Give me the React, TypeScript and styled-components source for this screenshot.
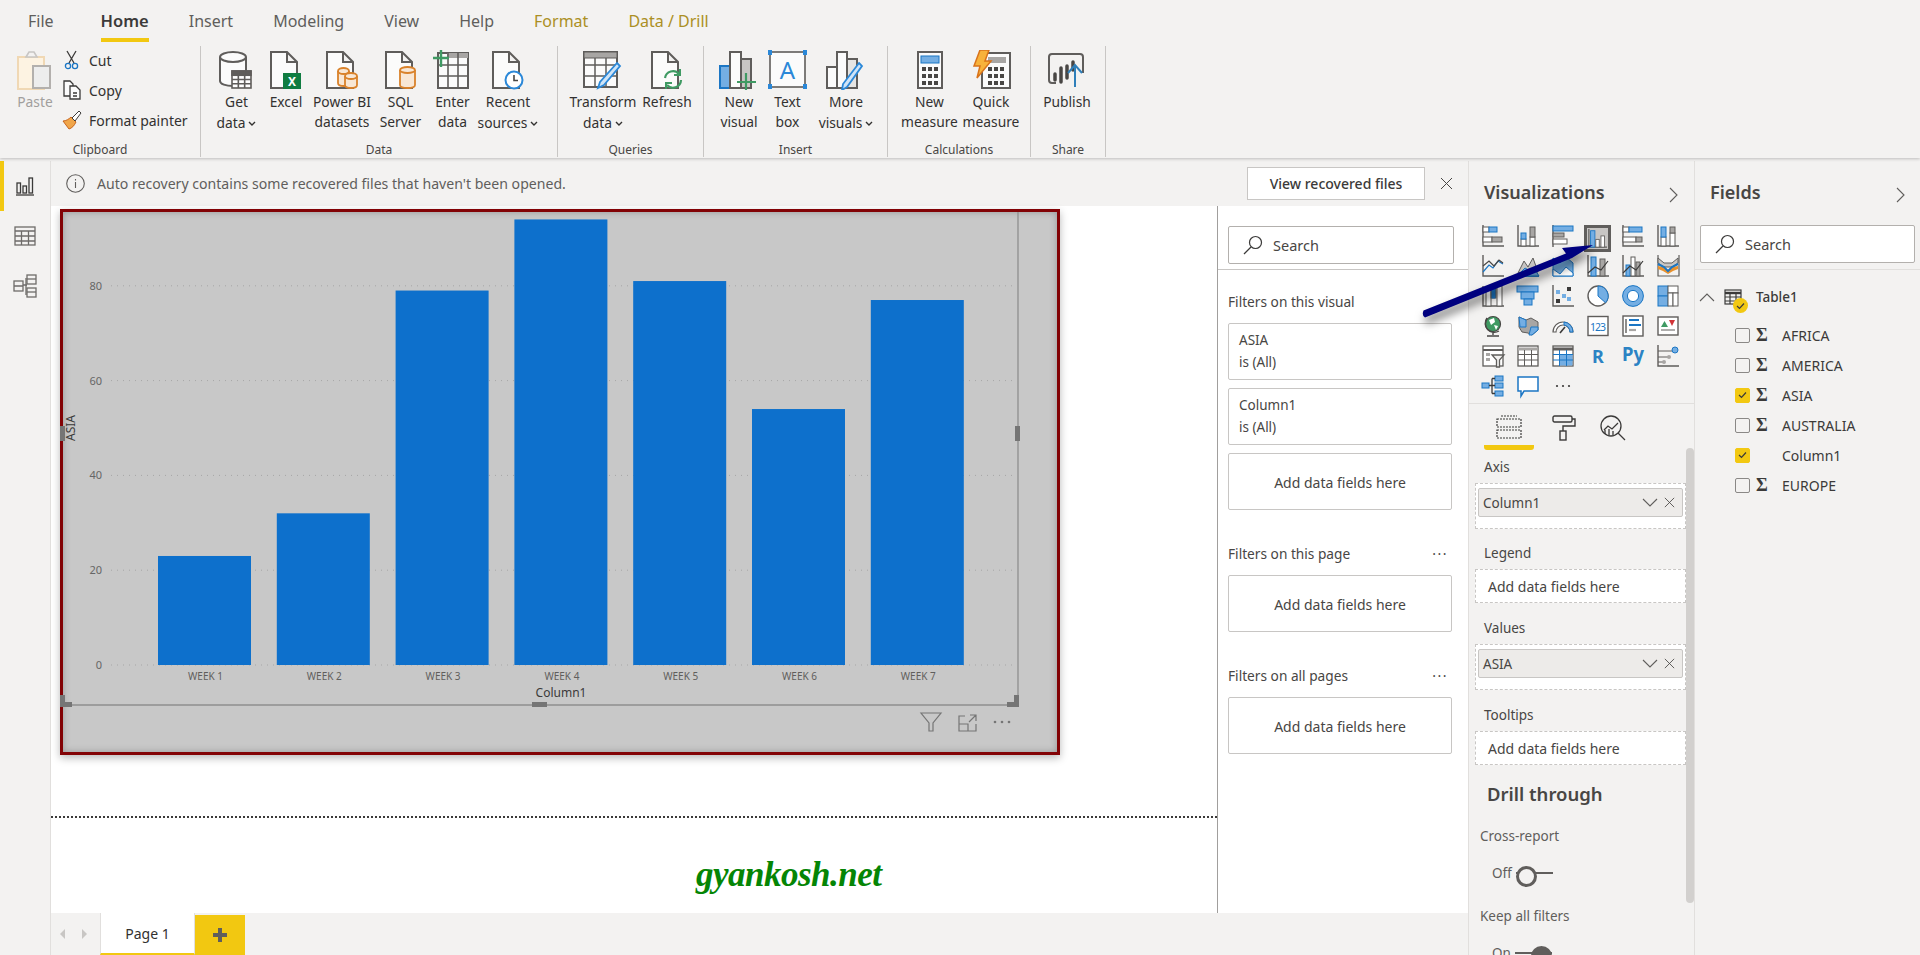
import React from "react";
import styled, { createGlobalStyle } from "styled-components";

const GlobalStyle = createGlobalStyle`
  html, body { margin: 0; padding: 0; height: 100%; background: #f3f2f1; }
  * { box-sizing: border-box; }
  body { font-family: "Noto Sans", "Open Sans", sans-serif; color: #3b3a39; }
`;

const O = "#5f5d5b";
const B = "#1b76c4";
const L = "#74aee3";
const G = "#a8a6a4";

/* ---------- ribbon icons ---------- */

const Doc = () => (
  <path d="M5 2h16l10 10v26H5z M21 2v10h10" fill="#fbfbfb" stroke={O} strokeWidth="2" />
);

const Cylinder = ({ x, y, w, h, c = "#d9822b" }: { x: number; y: number; w: number; h: number; c?: string }) => (
  <g fill="#f8e7d5" stroke={c} strokeWidth="1.8">
    <path d={`M${x} ${y + 3}v${h - 6}c0 4 ${w} 4 ${w} 0v-${h - 6}`} />
    <ellipse cx={x + w / 2} cy={y + 3} rx={w / 2} ry="3" />
  </g>
);

const MiniGrid = ({ x, y, w, h }: { x: number; y: number; w: number; h: number }) => (
  <g stroke={O} fill="none" strokeWidth="1.6">
    <rect x={x} y={y} width={w} height={h} fill="#fff" />
    <rect x={x} y={y} width={w} height={h / 4} fill={O} />
    <path d={`M${x + w / 3} ${y}v${h}M${x + (2 * w) / 3} ${y}v${h}M${x} ${y + h / 2}h${w}M${x} ${y + (3 * h) / 4}h${w}`} />
  </g>
);

const iconGetData = (
  <>
    <path d="M3 7v24c0 3 6 5 13 5s13-2 13-5V7" fill="#fbfbfb" stroke={O} strokeWidth="2" />
    <ellipse cx="16" cy="7" rx="13" ry="5" fill="#fbfbfb" stroke={O} strokeWidth="2" />
    <MiniGrid x={15} y={21} w={19} h={17} />
  </>
);
const iconExcel = (
  <>
    <Doc />
    <rect x="17" y="23" width="18" height="16" fill="#107c41" />
    <text x="26" y="36" textAnchor="middle" fontSize="12" fontWeight="700" fill="#fff">X</text>
  </>
);
const iconPbi = (
  <>
    <Doc />
    <Cylinder x={16} y={18} w={11} h={18} />
    <Cylinder x={23} y={23} w={12} h={15} />
  </>
);
const iconSql = (
  <>
    <Doc />
    <Cylinder x={19} y={17} w={15} h={21} />
  </>
);
const iconEnter = (
  <>
    <rect x="5" y="3" width="30" height="35" fill="#fbfbfb" stroke={O} strokeWidth="2" />
    <rect x="14" y="3" width="21" height="5" fill={G} />
    <path d="M5 15h30M5 26h30M15 3v35M25 3v35" stroke={O} strokeWidth="1.6" />
    <path d="M0 8h16M8 0v17" stroke="#3f9a63" strokeWidth="2.4" />
  </>
);
const iconRecent = (
  <>
    <Doc />
    <circle cx="26" cy="30" r="8.5" fill="#fff" stroke="#2b88d8" strokeWidth="2" />
    <path d="M26 25v5.5h4" fill="none" stroke="#484644" strokeWidth="1.6" />
  </>
);
const iconTransform = (
  <>
    <rect x="1" y="2" width="33" height="35" fill="#fbfbfb" stroke={O} strokeWidth="2" />
    <rect x="1" y="2" width="33" height="6" fill={G} stroke={O} strokeWidth="1" />
    <path d="M1 15h33M1 26h33M12 8v29M23 8v29" stroke={O} strokeWidth="1.5" />
    <path d="M34 13l3 3-16 19-6 3 2-6z" fill="#cfe4f7" stroke="#2b88d8" strokeWidth="1.8" />
  </>
);
const iconRefresh = (
  <>
    <Doc />
    <path d="M18 28a8 8 0 0 1 14-4M34 30a8 8 0 0 1-14 5" fill="none" stroke="#3f9a63" strokeWidth="2.2" />
    <path d="M33 19v6h-6M19 39v-6h6" fill="none" stroke="#3f9a63" strokeWidth="2" />
  </>
);
const iconNewVisual = (
  <>
    <rect x="1" y="16" width="10" height="22" fill={L} stroke="#1b76c4" strokeWidth="2" />
    <rect x="11" y="2" width="11" height="36" fill="#fbfbfb" stroke={O} strokeWidth="2" />
    <rect x="22" y="9" width="10" height="29" fill="#c8c6c4" stroke={O} strokeWidth="2" />
    <path d="M18 32h19M27 23v17" stroke="#3f9a63" strokeWidth="2.2" />
  </>
);
const iconTextBox = (
  <>
    <rect x="2" y="2" width="35" height="35" fill="#fbfbfb" stroke={O} strokeWidth="1.6" />
    <g fill="#2b88d8">
      <rect x="0" y="0" width="4" height="5" />
      <rect x="35" y="0" width="4" height="5" />
      <rect x="0" y="34" width="4" height="5" />
      <rect x="35" y="34" width="4" height="5" />
    </g>
    <text x="19.5" y="29" textAnchor="middle" fontSize="24" fill="#2b88d8">A</text>
  </>
);
const iconMoreVisuals = (
  <>
    <rect x="1" y="17" width="10" height="21" fill="#fbfbfb" stroke={O} strokeWidth="2" />
    <rect x="11" y="2" width="10" height="36" fill="#fbfbfb" stroke={O} strokeWidth="2" />
    <rect x="21" y="9" width="10" height="29" fill="#e6e5e3" stroke={O} strokeWidth="2" />
    <path d="M33 13l3 3-15 21-5 3 1-6z" fill="#cfe4f7" stroke="#2b88d8" strokeWidth="1.8" />
  </>
);
const Keys = ({ x, y }: { x: number; y: number }) => (
  <g fill="#484644">
    {[0, 7, 14].map((dy) =>
      [0, 6, 12].map((dx) => <rect key={`${dx}-${dy}`} x={x + dx} y={y + dy} width="4" height="4" />)
    )}
  </g>
);
const iconMeasure = (
  <>
    <rect x="8" y="2" width="24" height="36" fill="#fbfbfb" stroke={O} strokeWidth="2" />
    <rect x="11" y="6" width="18" height="7" fill={L} stroke="#1b76c4" />
    <Keys x={12} y={17} />
  </>
);
const iconQuick = (
  <>
    <rect x="11" y="3" width="28" height="35" fill="#fbfbfb" stroke={O} strokeWidth="2" />
    <rect x="17" y="7" width="18" height="6" fill={G} />
    <Keys x={17} y={17} />
    <path d="M9 0h9l-4 11h6L6 28l3-12H3z" fill="#f7b23b" stroke="#d9731a" strokeWidth="1.5" />
  </>
);
const iconPublish = (
  <>
    <path d="M9 33H5q-3 0-3-3V7q0-3 3-3h28q3 0 3 3v16" fill="none" stroke={O} strokeWidth="2" />
    <g stroke="#484644" strokeLinecap="round" fill="none">
      <path d="M8 24v6" strokeWidth="3.5" />
      <path d="M14 18v14" strokeWidth="3.5" />
      <path d="M20 16v12" strokeWidth="3.5" />
      <path d="M26 12v8" strokeWidth="3.5" />
    </g>
    <path d="M28 37V16M21 23l7-8 7 8" fill="none" stroke="#2f7fba" strokeWidth="2" />
  </>
);
const iconPaste = (
  <>
    <path d="M3 7h26v32H3z" fill="#fdf3e2" stroke="#f0d8b4" strokeWidth="2" />
    <path d="M11 7l3-5h5l3 5z" fill="#f3f2f1" stroke="#c8c6c4" strokeWidth="1.6" />
    <rect x="18" y="16" width="17" height="22" fill="#ededed" stroke="#b3b0ad" strokeWidth="2" />
  </>
);

/* ---------- small icons ---------- */

const iconChart = (
  <svg width="20" height="20" viewBox="0 0 20 20" fill="none" stroke="#3b3a39" strokeWidth="1.3">
    <path d="M1 19h18" />
    <rect x="2" y="7" width="3.5" height="10" />
    <rect x="8" y="10" width="3.5" height="7" />
    <rect x="14" y="2" width="3.5" height="15" />
  </svg>
);
const iconTable = (
  <svg width="22" height="20" viewBox="0 0 22 20" fill="none" stroke="#6d6b69" strokeWidth="1.3">
    <rect x="1" y="1" width="20" height="18" />
    <path d="M1 5h20M1 10h20M1 15h20M7.5 5v14M14.5 5v14" />
  </svg>
);
const iconModel = (
  <svg width="24" height="24" viewBox="0 0 24 24" fill="none" stroke="#6d6b69" strokeWidth="1.3">
    <rect x="1" y="7" width="9" height="10" />
    <path d="M1 12h9M10 11h4M13 4v17" />
    <rect x="14" y="1" width="9" height="9" />
    <path d="M14 5h9" />
    <rect x="14" y="14" width="9" height="9" />
    <path d="M14 18h9" />
  </svg>
);
const SearchIcon = () => (
  <svg width="20" height="20" viewBox="0 0 20 20" fill="none" stroke="#3b3a39" strokeWidth="1.2">
    <circle cx="12.5" cy="7.5" r="6" />
    <path d="M8 12L1 19" />
  </svg>
);
const Chevron = ({ dir }: { dir: "right" | "up" | "down" }) => {
  const d = { right: "M2 1l7 7-7 7", up: "M1 9l7-7 7 7", down: "M1 2l7 7 7-7" }[dir];
  return (
    <svg width={dir === "right" ? 11 : 16} height={dir === "right" ? 16 : 11} viewBox={dir === "right" ? "0 0 11 16" : "0 0 16 11"} fill="none" stroke="#605e5c" strokeWidth="1.1">
      <path d={d} />
    </svg>
  );
};
const CloseIcon = ({ size = 13 }: { size?: number }) => (
  <svg width={size} height={size} viewBox="0 0 13 13" fill="none" stroke="#484644" strokeWidth="1">
    <path d="M1 1l11 11M12 1L1 12" />
  </svg>
);
const CaretDown = () => (
  <svg width="8" height="6" viewBox="0 0 8 6" fill="none" stroke="#323130" strokeWidth="1.4">
    <path d="M1 1l3 3 3-3" />
  </svg>
);

/* ---------- visual gallery, 22 x 22 ---------- */

const Axis = () => <path d="M1 0v21h21" fill="none" stroke={O} strokeWidth="1.4" />;
const Cell = ({ x, y, w, h, c = "#fff", s = O }: { x: number; y: number; w: number; h: number; c?: string; s?: string }) => (
  <rect x={x} y={y} width={w} height={h} fill={c} stroke={s} strokeWidth="1" />
);

const gallery: React.ReactNode[] = [
  <><Axis /><Cell x={1} y={2} w={6} h={5} /><Cell x={7} y={2} w={8} h={5} c={L} s={B} /><Cell x={1} y={12} w={9} h={5} /><Cell x={10} y={12} w={10} h={5} c={G} /></>,
  <><Axis /><Cell x={4} y={14} w={5} h={7} /><Cell x={4} y={8} w={5} h={6} c={L} s={B} /><Cell x={13} y={12} w={5} h={9} /><Cell x={13} y={2} w={5} h={10} c={G} /></>,
  <><path d="M1 0v22" stroke={O} strokeWidth="1.4" /><Cell x={1} y={1} w={20} h={5} c={L} s={B} /><Cell x={1} y={8} w={11} h={4} c={G} /><Cell x={1} y={14} w={14} h={5} /></>,
  <><Axis /><Cell x={3} y={2} w={5} h={19} c={L} s={B} /><Cell x={9} y={12} w={4} h={9} /><Cell x={15} y={8} w={4} h={13} /></>,
  <><Axis /><Cell x={1} y={2} w={6} h={5} /><Cell x={7} y={2} w={13} h={5} c={L} s={B} /><Cell x={1} y={12} w={13} h={5} /><Cell x={14} y={12} w={6} h={5} c={G} /></>,
  <><Axis /><Cell x={4} y={12} w={5} h={9} /><Cell x={4} y={2} w={5} h={10} c={L} s={B} /><Cell x={13} y={8} w={5} h={13} /><Cell x={13} y={2} w={5} h={6} c={G} /></>,

  <><Axis /><path d="M1 17l6-7 4 3 5-7 5 3" fill="none" stroke={B} strokeWidth="1.2" /><path d="M1 11l6-5 5 5 5-6 4 3" fill="none" stroke="#484644" strokeWidth="1.2" /></>,
  <><path d="M1 18L7 6l4 6 5-9 5 14z" fill="#c8c6c4" stroke={O} /><path d="M0 21l8-8 5 3 4-3 5 8z" fill={L} stroke={B} /><path d="M0 21.4h22" stroke={B} /></>,
  <><path d="M1 3l7 5 6-6 7 6v13H1z" fill={L} stroke={B} /><path d="M1 21v-7l7 5 6-7 7 6v3z" fill="#fff" stroke={B} /></>,
  <><Axis /><Cell x={4} y={2} w={5} h={19} c={L} s={B} /><Cell x={13} y={4} w={5} h={17} c={G} /><path d="M1 18l7-6 6 3 7-9" fill="none" stroke="#3b3a39" strokeWidth="1.2" /></>,
  <><Axis /><Cell x={4} y={10} w={4} h={11} c={L} s={B} /><Cell x={9} y={2} w={4} h={19} /><Cell x={14} y={7} w={4} h={14} c={G} /><path d="M1 18l7-7 6 4 7-9" fill="none" stroke="#3b3a39" strokeWidth="1.2" /></>,
  <><path d="M1 0v21h21V0" fill="none" stroke={O} strokeWidth="1.2" /><path d="M1 3l6 5h8l6-5v5l-6 4H7L1 8z" fill="#c8c6c4" stroke={O} /><path d="M1 11l5 1 5 4 5-4 5-1v3l-5 2-5 3-5-3-5-2z" fill="#e8912d" /><path d="M1 9l6 3 4 4 4-4 6-3" fill="none" stroke={B} strokeWidth="2" /></>,

  <><path d="M1 1v20h21" fill="none" stroke={O} strokeWidth="1.4" /><Cell x={4} y={4} w={5} h={17} /><Cell x={9} y={1} w={5} h={12} c={O} /><Cell x={10} y={1} w={3} h={12} c={B} s={B} /><Cell x={15} y={1} w={5} h={20} /></>,
  <><Cell x={0} y={1} w={21} h={6} c={L} s={B} /><Cell x={4} y={7} w={13} h={7} c={L} s={B} /><Cell x={7} y={14} w={8} h={6} c={L} s={B} /></>,
  <><Axis /><rect x="4" y="5" width="4" height="4" fill={L} /><rect x="15" y="2" width="4" height="4" fill="#3b3a39" /><rect x="10" y="9" width="4" height="4" fill={L} /><rect x="4" y="14" width="4" height="4" fill="#3b3a39" /><rect x="15" y="12" width="4" height="4" fill={L} /></>,
  <><circle cx="11" cy="11" r="10" fill="#fff" stroke={O} strokeWidth="1.4" /><path d="M11 1a10 10 0 0 1 7.5 16.7L11 11z" fill={L} stroke={B} /></>,
  <><circle cx="11" cy="11" r="8" fill="none" stroke={L} strokeWidth="5" /><circle cx="11" cy="11" r="10.4" fill="none" stroke={B} strokeWidth="1" /><circle cx="11" cy="11" r="5.6" fill="#fff" stroke={B} strokeWidth="1" /></>,
  <><Cell x={1} y={1} w={10} h={10} c={L} s={B} /><Cell x={1} y={11} w={10} h={10} c={L} s={B} /><Cell x={11} y={1} w={10} h={7} /><Cell x={11} y={8} w={5} h={13} /><Cell x={16} y={8} w={5} h={13} /></>,

  <><circle cx="11" cy="9" r="7.5" fill="#3f9a63" stroke="#484644" strokeWidth="1.2" /><path d="M7 5l5-2 1 4-4 3zM12 10l4 1-2 4z" fill="#fff" /><path d="M5 3a9 9 0 0 0 12 13M11 17v3M5 21h12" fill="none" stroke="#484644" strokeWidth="1.4" /></>,
  <><path d="M2 2l7 3 5-2 7 4v8l-6 5-4-2-6-1-3-5z" fill={G} stroke={O} /><path d="M2 2l7 3v7H3zM12 20l2-8h7v3l-6 5z" fill={L} stroke={B} /></>,
  <><path d="M1 17a10 10 0 0 1 20 0h-3a7 7 0 0 0-14 0z" fill="#fff" stroke={O} strokeWidth="1.2" /><path d="M12 7a10 10 0 0 1 9 10h-3a7 7 0 0 0-6-7z" fill={L} stroke={B} /><path d="M8 18l5-6" stroke="#3b3a39" strokeWidth="1.6" /></>,
  <><rect x="1" y="1.5" width="20" height="19" fill="#fff" stroke={O} strokeWidth="1.4" /><text x="11" y="15.5" textAnchor="middle" fontSize="10.5" fill={B} textLength="16">123</text></>,
  <><rect x="1" y="1" width="20" height="20" fill="#fff" stroke={O} strokeWidth="1.4" /><path d="M4 4v14" stroke={O} strokeWidth="1.4" /><path d="M7 5h10M7 10h12" stroke={B} strokeWidth="2.2" /><path d="M7 15h7" stroke={G} strokeWidth="2.2" /></>,
  <><rect x="1" y="2" width="20" height="18" fill="#fff" stroke={O} strokeWidth="1.4" /><path d="M4 12l3.5-6 3.5 6z" fill="#3f9a63" /><path d="M12 5h6l-3 6z" fill="#d13438" /><path d="M4 15h14" stroke={O} /></>,

  <><rect x="1" y="1" width="20" height="20" fill="#fff" stroke={O} strokeWidth="1.3" /><path d="M1 5h20" stroke={O} strokeWidth="2" /><rect x="4" y="8" width="4" height="3" fill={G} /><rect x="4" y="13" width="4" height="3" fill={G} /><path d="M10 10h12l-4.5 5v7h-3v-7z" fill="#f3f2f1" stroke={O} strokeWidth="1.3" /></>,
  <><rect x="1" y="1" width="20" height="20" fill="#fff" stroke={O} strokeWidth="1.3" /><path d="M1 4h20" stroke={G} strokeWidth="3" /><path d="M1 9.5h20M1 15h20M7.5 5v16M14.5 5v16" stroke={O} /></>,
  <><rect x="1" y="1" width="20" height="20" fill="#fff" stroke={O} strokeWidth="1.3" /><path d="M1 4h20" stroke={O} strokeWidth="3" /><rect x="7.5" y="9.5" width="13" height="11" fill={L} /><path d="M1 9.5h20M1 15h20M7.5 5v16M14.5 5v16" stroke={B} /></>,
  <><text x="11" y="18" textAnchor="middle" fontSize="18" fontWeight="700" fill="#2c83c4">R</text></>,
  <><text x="11" y="16" textAnchor="middle" fontSize="19" fontWeight="700" fill="#2c83c4" textLength="22" lengthAdjust="spacingAndGlyphs">Py</text></>,
  <><path d="M1 0v21h21" fill="none" stroke={O} strokeWidth="1.4" /><path d="M1 6h15M1 12h11M1 17h7" stroke={O} /><circle cx="18" cy="5" r="3" fill={L} stroke={B} /><circle cx="12" cy="12" r="2" fill={G} /><circle cx="7" cy="17" r="2" fill={G} /></>,

  <><rect x="0" y="8" width="7" height="5" fill={L} stroke={B} /><rect x="13" y="1" width="8" height="5" fill={L} stroke={B} /><rect x="13" y="8" width="8" height="5" fill={L} stroke={B} /><rect x="13" y="16" width="8" height="5" fill={L} stroke={B} /><path d="M7 10.5h6M10 3.5v15M10 3.5h3M10 18.5h3" stroke="#3b3a39" strokeWidth="1.3" fill="none" /></>,
  <><path d="M1 2h20v14H7l-3 5v-5H1z" fill="#fff" stroke={B} strokeWidth="1.5" /></>,
  <><g fill="#3b3a39"><circle cx="5" cy="11" r="1.1" /><circle cx="11" cy="11" r="1.1" /><circle cx="17" cy="11" r="1.1" /></g></>,
];

/* ---------- data ---------- */

const weeks = [23, 32, 79, 94, 81, 54, 77];
const checkboxes = [
  { name: "AFRICA", sigma: true, on: false },
  { name: "AMERICA", sigma: true, on: false },
  { name: "ASIA", sigma: true, on: true },
  { name: "AUSTRALIA", sigma: true, on: false },
  { name: "Column1", sigma: false, on: true },
  { name: "EUROPE", sigma: true, on: false },
];
const tabs = ["File", "Home", "Insert", "Modeling", "View", "Help", "Format", "Data / Drill"];

const ribbon: { label: string; width: number; pad: number; buttons: { lines: string[]; w: number; icon: React.ReactNode; caret?: boolean }[] }[] = [
  {
    label: "Data",
    width: 357,
    pad: 11,
    buttons: [
      { lines: ["Get", "data"], w: 49, icon: iconGetData, caret: true },
      { lines: ["Excel"], w: 50, icon: iconExcel },
      { lines: ["Power BI", "datasets"], w: 62, icon: iconPbi },
      { lines: ["SQL", "Server"], w: 55, icon: iconSql },
      { lines: ["Enter", "data"], w: 49, icon: iconEnter },
      { lines: ["Recent", "sources"], w: 62, icon: iconRecent, caret: true },
    ],
  },
  {
    label: "Queries",
    width: 146,
    pad: 11,
    buttons: [
      { lines: ["Transform", "data"], w: 68, icon: iconTransform, caret: true },
      { lines: ["Refresh"], w: 60, icon: iconRefresh },
    ],
  },
  {
    label: "Insert",
    width: 184,
    pad: 12,
    buttons: [
      { lines: ["New", "visual"], w: 46, icon: iconNewVisual },
      { lines: ["Text", "box"], w: 51, icon: iconTextBox },
      { lines: ["More", "visuals"], w: 66, icon: iconMoreVisuals, caret: true },
    ],
  },
  {
    label: "Calculations",
    width: 143,
    pad: 10,
    buttons: [
      { lines: ["New", "measure"], w: 63, icon: iconMeasure },
      { lines: ["Quick", "measure"], w: 60, icon: iconQuick },
    ],
  },
  {
    label: "Share",
    width: 75,
    pad: 6,
    buttons: [{ lines: ["Publish"], w: 60, icon: iconPublish }],
  },
];

/* ---------- layout ---------- */

const Page = styled.div`
  position: relative;
  width: 1920px;
  height: 955px;
  overflow: hidden;
  background: #f3f2f1;
`;
const Header = styled.header`
  position: relative;
  z-index: 3;
  height: 158px;
  background: #f3f2f1;
  box-shadow: 0 1px 3px rgba(0, 0, 0, 0.22);
`;
const TabRow = styled.nav`
  display: flex;
  gap: 40px;
  height: 46px;
  padding-left: 28px;
`;
const Tab = styled.div<{ $active?: boolean; $context?: boolean }>`
  position: relative;
  padding-top: 9px;
  font-size: ${(p) => (p.$active ? 16.5 : 16)}px;
  line-height: 24px;
  white-space: nowrap;
  color: ${(p) => (p.$context ? "#ab8f24" : p.$active ? "#3b3a39" : "#605e5c")};
  font-weight: ${(p) => (p.$active ? 600 : 400)};
  ${(p) => p.$active && "margin-left: 7px;"}

  ${(p) =>
    p.$active &&
    `&::after {
      content: "";
      position: absolute;
      left: 0;
      right: 0;
      top: 38px;
      height: 4px;
      background: #f2c811;
    }`}
`;
const RibbonRow = styled.div`
  display: flex;
  height: 111px;
`;
const Group = styled.section<{ $w: number; $pad: number }>`
  width: ${(p) => p.$w}px;
  padding: 4px 0 0 ${(p) => p.$pad}px;
  display: flex;
  flex-direction: column;
  border-right: 1px solid #c8c6c4;
`;
const Buttons = styled.div`
  display: flex;
  flex: 1;
`;
const GroupLabel = styled.div<{ $pad: number }>`
  margin-left: -${(p) => p.$pad}px;
  text-align: center;
  font-size: 12px;
  line-height: 16px;
  color: #484644;
  position: relative;
  top: 1px;
`;
const BigButton = styled.div<{ $w: number; $muted?: boolean }>`
  width: ${(p) => p.$w}px;
  display: flex;
  flex-direction: column;
  align-items: center;
  font-size: 13.8px;
  line-height: 19.5px;
  color: ${(p) => (p.$muted ? "#a19f9d" : "#323130")};
  white-space: nowrap;

  svg.big {
    margin-bottom: 2px;
    flex: none;
  }
`;
const Caret = styled.span`
  display: inline-block;
  margin-left: 3px;
  vertical-align: 1px;
`;
const SmallColumn = styled.div`
  display: flex;
  flex-direction: column;
  padding-left: 8px;
  margin-top: -5px;
`;
const SmallButton = styled.div`
  height: 30px;
  display: flex;
  align-items: center;
  font-size: 14px;
  color: #323130;
  white-space: nowrap;

  svg {
    width: 20px;
    margin-right: 7px;
    flex: none;
  }
`;
const Body = styled.div`
  display: flex;
  height: 797px;
  padding-top: 3px;
`;
const Rail = styled.aside`
  width: 51px;
  flex: none;
  display: flex;
  flex-direction: column;
  border-right: 1px solid #e1dfdd;
`;
const RailItem = styled.div<{ $active?: boolean }>`
  height: 50px;
  display: flex;
  align-items: center;
  justify-content: center;
  border-left: 4px solid ${(p) => (p.$active ? "#f2c811" : "transparent")};
  padding-right: 4px;
`;
const Main = styled.main`
  width: 1417px;
  flex: none;
  display: flex;
  flex-direction: column;
`;
const Notice = styled.div`
  height: 45px;
  flex: none;
  display: flex;
  align-items: center;
  padding-left: 15px;
  font-size: 14.1px;
  color: #605e5c;
  position: relative;
  z-index: 2;
`;
const NoticeText = styled.span`
  margin-left: 12px;
  flex: 1;
`;
const RecoverButton = styled.button`
  width: 178px;
  height: 33px;
  margin-right: 15px;
  background: #fff;
  border: 1px solid #c8c6c4;
  font: 500 14px "Noto Sans", sans-serif;
  color: #3b3a39;
`;
const CloseButton = styled.span`
  display: flex;
  margin-right: 15px;
`;
const Middle = styled.div`
  flex: 1;
  display: flex;
  min-height: 0;
`;
const Canvas = styled.div`
  width: 1166px;
  background: #fff;
  display: flex;
  flex-direction: column;
`;
const VisualBox = styled.div`
  position: relative;
  width: 1000px;
  height: 546px;
  margin: 3px 0 0 9px;
  background: #c8c8c8;
  border: 3px solid #820205;
  box-shadow: 0 3px 8px rgba(0, 0, 0, 0.28), inset 0 0 7px rgba(0, 0, 0, 0.25);

  svg {
    display: block;
    overflow: visible;
  }
`;
const PageEdge = styled.div`
  margin-top: 61px;
  border-top: 2px dotted #3b3a39;
`;
const Watermark = styled.div`
  margin-top: 35px;
  padding-left: 645px;
  font: italic 700 35px/44px "Liberation Serif", serif;
  color: #058505;
  letter-spacing: -0.5px;
`;
const Filters = styled.aside`
  flex: 1;
  background: #fff;
  border-left: 1px solid #a19f9d;
  display: flex;
  flex-direction: column;
`;
const FilterSearchBar = styled.div`
  height: 64px;
  flex: none;
  padding: 20px 14px 0 10px;
  border-bottom: 1px solid #c8c6c4;
`;
const SearchBox = styled.div<{ $h: number }>`
  height: ${(p) => p.$h}px;
  background: #fff;
  border: 1px solid #b3b0ad;
  border-radius: 2px;
  display: flex;
  align-items: center;
  gap: 10px;
  padding-left: 14px;
  font-size: 14.5px;
  color: #484644;
`;
const FilterHead = styled.div<{ $top: number }>`
  margin: ${(p) => p.$top}px 0 0 10px;
  width: 224px;
  height: 20px;
  display: flex;
  justify-content: space-between;
  align-items: center;
  font-size: 13.7px;
  color: #484644;
`;
const Dots = styled.span`
  font-size: 14px;
  letter-spacing: 1.5px;
  padding-right: 4px;
  line-height: 10px;
  padding-bottom: 6px;
`;
const FilterCard = styled.div<{ $center?: boolean; $gap?: number }>`
  width: 224px;
  height: 57px;
  margin: ${(p) => p.$gap ?? 8}px 0 0 10px;
  border: 1px solid #c8c6c4;
  border-radius: 2px;
  font-size: ${(p) => (p.$center ? 14 : 13.5)}px;
  line-height: 22px;
  color: #484644;
  padding: ${(p) => (p.$center ? "2px 0 0" : "5px 10px")};
  ${(p) => p.$center && "display:flex;align-items:center;justify-content:center;"}
`;
const PageTabs = styled.div`
  height: 42px;
  flex: none;
  display: flex;
  align-items: flex-end;
  padding-left: 6px;
`;
const PageArrows = styled.div`
  width: 43px;
  height: 42px;
  display: flex;
  align-items: center;
  gap: 17px;
  padding-left: 3px;
`;
const Arrow = styled.span<{ $flip?: boolean }>`
  width: 0;
  height: 0;
  border-top: 5px solid transparent;
  border-bottom: 5px solid transparent;
  ${(p) => (p.$flip ? "border-left: 5px solid #c8c6c4;" : "border-right: 5px solid #c8c6c4;")}
`;
const PageTab = styled.div`
  width: 95px;
  height: 42px;
  background: #fff;
  border-left: 1px solid #e1dfdd;
  border-right: 1px solid #e1dfdd;
  border-bottom: 2px solid #f2c811;
  display: flex;
  align-items: center;
  justify-content: center;
  font-size: 14px;
  color: #323130;
`;
const AddPage = styled.div`
  width: 50px;
  height: 40px;
  background: #f2c811;
  display: flex;
  align-items: center;
  justify-content: center;
`;

const VizPane = styled.aside`
  position: relative;
  width: 227px;
  flex: none;
  border-left: 1px solid #e1dfdd;
  border-right: 1px solid #e1dfdd;
  overflow: hidden;
`;
const PaneHead = styled.div<{ $pad: number; $h: number }>`
  height: ${(p) => p.$h}px;
  padding: 20px ${(p) => p.$pad}px 0 15px;
  display: flex;
  justify-content: space-between;
  align-items: flex-start;

  svg {
    margin-top: 6px;
  }
`;
const PaneTitle = styled.h2`
  margin: 0;
  font-size: 18px;
  line-height: 22px;
  font-weight: 600;
  color: #484644;
`;
const GalleryGrid = styled.div`
  display: grid;
  grid-template-columns: repeat(6, 35px);
  grid-auto-rows: 30px;
  padding: 0 0 0 6px;
  height: 181px;
  border-bottom: 1px solid #e1dfdd;
`;
const GalleryCell = styled.div<{ $selected?: boolean }>`
  display: flex;
  align-items: center;
  justify-content: center;

  ${(p) =>
    p.$selected &&
    `& > div {
      width: 27px;
      height: 27px;
      background: #c8c6c4;
      border: 3px solid #605e5c;
      display: flex;
      align-items: center;
      justify-content: center;
    }`}
`;
const WellTabs = styled.div`
  display: flex;
  height: 46px;
  padding-left: 15px;
  position: relative;
`;
const WellTab = styled.div<{ $active?: boolean; $w: number }>`
  width: ${(p) => p.$w}px;
  height: 46px;
  display: flex;
  justify-content: center;
  padding-top: 11px;
  ${(p) => p.$active && "border-bottom: 5px solid #f2c811; border-radius: 0 0 3px 3px;"}
`;
const Wells = styled.div`
  padding-top: 8px;
`;
const WellLabel = styled.div<{ $gap?: number }>`
  margin: ${(p) => p.$gap ?? 0}px 0 7px 15px;
  font-size: 13.5px;
  line-height: 18px;
  color: #484644;
`;
const Well = styled.div<{ $filled?: boolean }>`
  width: 211px;
  margin-left: 6px;
  background: #fff;
  border: 1px dashed #c8c6c4;
  height: ${(p) => (p.$filled ? 46 : 34)}px;
  padding: ${(p) => (p.$filled ? "4px 2px 0" : "0 0 0 12px")};
  font-size: 14px;
  color: #484644;
  ${(p) => !p.$filled && "display:flex;align-items:center;"}
`;
const Pill = styled.div`
  height: 29px;
  background: #edebe9;
  border: 1px solid #c8c6c4;
  border-radius: 2px;
  display: flex;
  align-items: center;
  padding: 0 7px 0 4px;
  font-size: 13.5px;
  color: #484644;

  span {
    flex: 1;
  }
  svg + svg {
    margin-left: 6px;
  }
`;
const DrillTitle = styled.h3`
  margin: 18px 0 0 18px;
  font-size: 18.5px;
  line-height: 22px;
  font-weight: 600;
  color: #484644;
`;
const OptionLabel = styled.div<{ $gap: number }>`
  margin: ${(p) => p.$gap}px 0 0 11px;
  font-size: 13.5px;
  line-height: 18px;
  color: #605e5c;
`;
const SwitchRow = styled.div`
  margin: 19px 0 0 23px;
  display: flex;
  align-items: center;
  font-size: 13.5px;
  line-height: 18px;
  color: #605e5c;
  gap: 4px;
`;
const Switch = styled.div<{ $on?: boolean }>`
  position: relative;
  width: 37px;
  height: 15px;

  &::before {
    content: "";
    position: absolute;
    left: 0;
    right: 0;
    top: 6px;
    height: 2px;
    background: #605e5c;
  }
  &::after {
    content: "";
    position: absolute;
    top: 0;
    ${(p) => (p.$on ? "right: 0; background: #605e5c;" : "left: 0; background: #f3f2f1;")}
    width: 15px;
    height: 15px;
    border-radius: 50%;
    border: 3px solid #605e5c;
  }
`;
const Scrollbar = styled.div`
  position: absolute;
  left: 217px;
  top: 287px;
  width: 8px;
  height: 455px;
  background: #d2d0ce;
  border-radius: 4px;
`;
const FieldsPane = styled.aside`
  flex: 1;
  min-width: 0;
`;
const FieldSearchWrap = styled.div`
  height: 45px;
  padding: 0 5px 0 5px;
  border-bottom: 1px solid #e1dfdd;
`;
const TableRow = styled.div`
  display: flex;
  align-items: center;
  margin: 15px 0 0 4px;
  height: 24px;
  font-size: 13.5px;
  font-weight: 500;
  color: #3b3a39;
`;
const TableIcon = styled.div`
  position: relative;
  width: 18px;
  height: 16px;
  margin: 0 14px 0 9px;
`;
const Badge = styled.span`
  position: absolute;
  left: 9px;
  top: 9px;
  width: 15px;
  height: 15px;
  border-radius: 50%;
  background: #f2c811;
  display: flex;
  align-items: center;
  justify-content: center;
`;
const FieldList = styled.ul`
  list-style: none;
  margin: 11px 0 0;
  padding: 0 0 0 40px;
`;
const FieldRow = styled.li`
  height: 30px;
  display: flex;
  align-items: center;
  font-size: 14px;
  color: #3b3a39;
`;
const Check = styled.span<{ $on?: boolean }>`
  width: 15px;
  height: 15px;
  border-radius: 2px;
  border: 1px solid ${(p) => (p.$on ? "#f2c811" : "#8a8886")};
  background: ${(p) => (p.$on ? "#f2c811" : "transparent")};
  display: flex;
  align-items: center;
  justify-content: center;
  flex: none;
`;
const Sigma = styled.span`
  width: 32px;
  padding-left: 6px;
  font: 700 18px/1 "Liberation Serif", serif;
  color: #3b3a39;
  flex: none;
`;
const Overlay = styled.svg`
  position: absolute;
  left: 0;
  top: 0;
  z-index: 5;
  pointer-events: none;
  overflow: visible;
  filter: drop-shadow(2px 6px 5px rgba(0, 0, 0, 0.55));
`;

const Tick = () => (
  <svg width="9" height="8" viewBox="0 0 9 8" fill="none" stroke="#3b3a39" strokeWidth="1.2">
    <path d="M1 4l2.5 2.5L8 1.5" />
  </svg>
);

const Big = ({ icon, width = 40 }: { icon: React.ReactNode; width?: number }) => (
  <svg className="big" width={width} height="40" viewBox="0 0 40 40">
    {icon}
  </svg>
);

/* ---------- chart ---------- */

const Chart = () => {
  const base = 665;
  const unit = 4.74;
  return (
    <svg width="994" height="540" viewBox="63 212 994 540">
      {[0, 20, 40, 60, 80].map((v) => (
        <g key={v}>
          <line x1="111" x2="1012" y1={base - v * unit} y2={base - v * unit} stroke="#a6a6a6" strokeDasharray="1 5" />
          <text x="102" y={base - v * unit + 4} textAnchor="end" fontSize="11" fill="#666">{v}</text>
        </g>
      ))}
      {weeks.map((v, i) => (
        <g key={i}>
          <rect x={158 + i * 118.8} y={base - v * unit} width="93" height={v * unit} fill="#0d70cc" />
          <text x={205.5 + i * 118.8} y="680" textAnchor="middle" fontSize="10" fill="#605e5c">WEEK {i + 1}</text>
        </g>
      ))}
      <text transform="translate(75 428) rotate(-90)" textAnchor="middle" fontSize="12" fill="#3b3a39">ASIA</text>
      <text x="561" y="697" textAnchor="middle" fontSize="12" fill="#3b3a39">Column1</text>

      <path d="M1018 212V705H66" fill="none" stroke="#8f8f8f" strokeWidth="1.3" />
      <g fill="#757575">
        <path d="M60 695h5v7h7v5H60z" />
        <rect x="532" y="702" width="15" height="5" />
        <path d="M1019 695h-5v7h-7v5h12z" />
        <rect x="1015" y="426" width="5" height="15" />
        <rect x="60" y="426" width="5" height="15" />
      </g>
      <g fill="none" stroke="#757575" strokeWidth="1.2">
        <path d="M921 713h20l-8 10v8h-4v-8z" />
        <path d="M965 716h-6v15h17v-7M959 724h9v7M970 715h6v6M976 715l-7 7" />
      </g>
      <g fill="#757575">
        <circle cx="995" cy="722" r="1.3" />
        <circle cx="1002" cy="722" r="1.3" />
        <circle cx="1009" cy="722" r="1.3" />
      </g>
    </svg>
  );
};

/* ---------- page ---------- */

const FieldTabIcons = [
  <svg key="a" width="26" height="25" viewBox="0 0 26 25" fill="none" stroke="#3b3a39" strokeWidth="1.2" strokeDasharray="2 1">
    <path d="M5 1h16" />
    <rect x="1" y="4" width="24" height="8" />
    <rect x="1" y="15" width="24" height="8" />
  </svg>,
  <svg key="b" width="24" height="26" viewBox="0 0 24 26" fill="none" stroke="#3b3a39" strokeWidth="1.4">
    <rect x="1" y="1" width="19" height="6" rx="1.5" />
    <path d="M20 4h3v7H11v5" />
    <rect x="8" y="16" width="6" height="9" />
  </svg>,
  <svg key="c" width="26" height="26" viewBox="0 0 26 26" fill="none" stroke="#3b3a39" strokeWidth="1.3">
    <circle cx="11" cy="11" r="10" />
    <path d="M18 18l7 7M4 15l4-4 4 3 6-6M5 19v-4M9 20v-6M13 20v-4" />
  </svg>,
];

export default function App() {
  return (
    <Page>
      <GlobalStyle />
      <Header>
        <TabRow>
          {tabs.map((t, i) => (
            <Tab key={t} $active={t === "Home"} $context={i >= 6}>
              {t}
            </Tab>
          ))}
        </TabRow>
        <RibbonRow>
          <Group $w={201} $pad={16}>
            <Buttons>
              <BigButton $w={38} $muted>
                <Big icon={iconPaste} />
                Paste
              </BigButton>
              <SmallColumn>
                <SmallButton>
                  <svg width="20" height="20" viewBox="0 0 20 20" fill="none" stroke="#3b3a39" strokeWidth="1.3">
                    <path d="M5 1l7 12M14 1L7 13" />
                    <circle cx="6" cy="16" r="2.6" stroke="#1b76c4" />
                    <circle cx="13" cy="16" r="2.6" stroke="#1b76c4" />
                  </svg>
                  Cut
                </SmallButton>
                <SmallButton>
                  <svg width="20" height="20" viewBox="0 0 20 20" fill="#fbfbfb" stroke="#3b3a39" strokeWidth="1.3">
                    <path d="M2 1h6l3 3v12H2z" />
                    <path d="M8 6h6l4 4v9H8z" />
                    <path d="M11 13h4M11 16h4" />
                  </svg>
                  Copy
                </SmallButton>
                <SmallButton>
                  <svg width="20" height="20" viewBox="0 0 20 20">
                    <path d="M1 11l6 8c3-1 5-3 7-7l-5-5c-2 2-5 4-8 4z" fill="#f0a64a" stroke="#c8641b" />
                    <path d="M10 8l7-7 2 2-6 8z" fill="#fff" stroke="#3b3a39" />
                  </svg>
                  Format painter
                </SmallButton>
              </SmallColumn>
            </Buttons>
            <GroupLabel $pad={16}>Clipboard</GroupLabel>
          </Group>
          {ribbon.map((g) => (
            <Group key={g.label} $w={g.width} $pad={g.pad}>
              <Buttons>
                {g.buttons.map((b) => (
                  <BigButton key={b.lines.join()} $w={b.w}>
                    <Big icon={b.icon} />
                    {b.lines.map((line, i) => (
                      <div key={line}>
                        {line}
                        {b.caret && i === b.lines.length - 1 && (
                          <Caret>
                            <CaretDown />
                          </Caret>
                        )}
                      </div>
                    ))}
                  </BigButton>
                ))}
              </Buttons>
              <GroupLabel $pad={g.pad}>{g.label}</GroupLabel>
            </Group>
          ))}
        </RibbonRow>
      </Header>

      <Body>
        <Rail>
          <RailItem $active>{iconChart}</RailItem>
          <RailItem>{iconTable}</RailItem>
          <RailItem>{iconModel}</RailItem>
        </Rail>

        <Main>
          <Notice>
            <svg width="19" height="19" viewBox="0 0 19 19" fill="none" stroke="#605e5c" strokeWidth="1.1">
              <circle cx="9.5" cy="9.5" r="8.8" />
              <path d="M9.5 8v6M9.5 5v1.4" />
            </svg>
            <NoticeText>Auto recovery contains some recovered files that haven't been opened.</NoticeText>
            <RecoverButton>View recovered files</RecoverButton>
            <CloseButton>
              <CloseIcon />
            </CloseButton>
          </Notice>
          <Middle>
            <Canvas>
              <VisualBox>
                <Chart />
              </VisualBox>
              <PageEdge />
              <Watermark>gyankosh.net</Watermark>
            </Canvas>
            <Filters>
              <FilterSearchBar>
                <SearchBox $h={38}>
                  <SearchIcon />
                  Search
                </SearchBox>
              </FilterSearchBar>
              <FilterHead $top={21}>Filters on this visual</FilterHead>
              <FilterCard $gap={12}>
                ASIA
                <br />
                is (All)
              </FilterCard>
              <FilterCard $gap={8}>
                Column1
                <br />
                is (All)
              </FilterCard>
              <FilterCard $center $gap={8}>Add data fields here</FilterCard>
              <FilterHead $top={33}>
                Filters on this page
                <Dots>...</Dots>
              </FilterHead>
              <FilterCard $center $gap={12}>Add data fields here</FilterCard>
              <FilterHead $top={33}>
                Filters on all pages
                <Dots>...</Dots>
              </FilterHead>
              <FilterCard $center $gap={12}>Add data fields here</FilterCard>
            </Filters>
          </Middle>
          <PageTabs>
            <PageArrows>
              <Arrow />
              <Arrow $flip />
            </PageArrows>
            <PageTab>Page 1</PageTab>
            <AddPage>
              <svg width="14" height="14" viewBox="0 0 14 14" fill="#605e5c">
                <path d="M5 0h4v5h5v4H9v5H5V9H0V5h5z" />
              </svg>
            </AddPage>
          </PageTabs>
        </Main>

        <VizPane>
          <PaneHead $pad={15} $h={62}>
            <PaneTitle>Visualizations</PaneTitle>
            <Chevron dir="right" />
          </PaneHead>
          <GalleryGrid>
            {gallery.map((icon, i) => (
              <GalleryCell key={i} $selected={i === 3}>
                <div>
                  <svg width={i === 3 ? 19 : 22} height={i === 3 ? 19 : 22} viewBox="0 0 22 22" overflow="visible">
                    {icon}
                  </svg>
                </div>
              </GalleryCell>
            ))}
          </GalleryGrid>
          <WellTabs>
            <WellTab $active $w={50}>{FieldTabIcons[0]}</WellTab>
            <WellTab $w={60}>{FieldTabIcons[1]}</WellTab>
            <WellTab $w={38}>{FieldTabIcons[2]}</WellTab>
          </WellTabs>
          <Wells>
            <WellLabel>Axis</WellLabel>
            <Well $filled>
              <Pill>
                <span>Column1</span>
                <Chevron dir="down" />
                <CloseIcon size={11} />
              </Pill>
            </Well>
            <WellLabel $gap={15}>Legend</WellLabel>
            <Well>Add data fields here</Well>
            <WellLabel $gap={16}>Values</WellLabel>
            <Well $filled>
              <Pill>
                <span>ASIA</span>
                <Chevron dir="down" />
                <CloseIcon size={11} />
              </Pill>
            </Well>
            <WellLabel $gap={16}>Tooltips</WellLabel>
            <Well>Add data fields here</Well>
          </Wells>
          <DrillTitle>Drill through</DrillTitle>
          <OptionLabel $gap={22}>Cross-report</OptionLabel>
          <SwitchRow>
            Off
            <Switch />
          </SwitchRow>
          <OptionLabel $gap={25}>Keep all filters</OptionLabel>
          <SwitchRow>
            On
            <Switch $on />
          </SwitchRow>
          <Scrollbar />
        </VizPane>

        <FieldsPane>
          <PaneHead $pad={14} $h={64}>
            <PaneTitle>Fields</PaneTitle>
            <Chevron dir="right" />
          </PaneHead>
          <FieldSearchWrap>
            <SearchBox $h={38}>
              <SearchIcon />
              Search
            </SearchBox>
          </FieldSearchWrap>
          <TableRow>
            <Chevron dir="up" />
            <TableIcon>
              <svg width="18" height="16" viewBox="0 0 18 16" fill="none" stroke="#3b3a39" strokeWidth="1.2">
                <rect x="1" y="1" width="16" height="14" />
                <path d="M1 4h16" strokeWidth="2.4" />
                <path d="M1 8h16M1 12h16M6 4v11M12 4v11" />
              </svg>
              <Badge>
                <Tick />
              </Badge>
            </TableIcon>
            Table1
          </TableRow>
          <FieldList>
            {checkboxes.map((f) => (
              <FieldRow key={f.name}>
                <Check $on={f.on}>{f.on && <Tick />}</Check>
                <Sigma>{f.sigma ? "Σ" : ""}</Sigma>
                {f.name}
              </FieldRow>
            ))}
          </FieldList>
        </FieldsPane>
      </Body>

      <Overlay width="1920" height="955" viewBox="0 0 1920 955">
        <path d="M1425 317.5L1566 260.5L1572 258L1593 245L1562 248L1566 253.5L1423.5 310.5Q1421.5 315.5 1425 317.5Z" fill="#00007f" />
      </Overlay>
    </Page>
  );
}
